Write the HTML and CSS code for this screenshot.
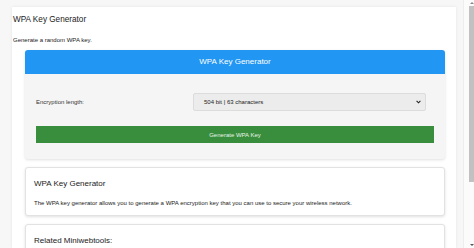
FILE: index.html
```html
<!DOCTYPE html>
<html lang="en">

<head>
    <meta charset="UTF-8">
    <meta name="viewport" content="width=device-width, initial-scale=1.0">
    <title>WPA Key Generator</title>
    <link rel="stylesheet" href="styles.css">
</head>

<body>
    <div class="page">
        <div class="intro">
            <h1>WPA Key Generator</h1>
            <p>Generate a random WPA key.</p>
        </div>

        <div class="tools">
            <div class="card tool-card">
                <div class="tool-header">WPA Key Generator</div>
                <div class="tool-body">
                    <div class="form-row">
                        <label for="key-length">Encryption length:</label>
                        <div class="select-box">
                            <span id="key-length">504 bit | 63 characters</span>
                            <svg class="chevron" width="5" height="4" viewBox="0 0 5 4">
                                <path d="M0.6 0.8 L2.5 2.8 L4.4 0.8" fill="none" stroke="#222" stroke-width="1.1"/>
                            </svg>
                        </div>
                    </div>
                    <button class="generate-button">Generate WPA Key</button>
                </div>
            </div>

            <div class="card info-card">
                <h2>WPA Key Generator</h2>
                <p>The WPA key generator allows you to generate a WPA encryption key that you can use to secure your wireless network.</p>
            </div>

            <div class="card info-card">
                <h2>Related Miniwebtools:</h2>
            </div>
        </div>
    </div>

    <div class="scrollbar">
        <span class="scroll-arrow up"></span>
        <div class="scroll-thumb"></div>
        <span class="scroll-arrow down"></span>
    </div>
</body>

</html>
```

FILE: styles.css
```css
* {
    margin: 0;
    padding: 0;
    box-sizing: border-box;
}

html,
body {
    height: 248px;
    overflow: hidden;
}

body {
    font-family: "Liberation Sans", Arial, sans-serif;
    color: #333;
    background-color: #f7f7f7;
    padding: 7px 0 0 12px;
}

.page {
    width: 444px;
    height: 241px;
    overflow: hidden;
    background-color: #fff;
    box-shadow: 0 0 3px rgba(0, 0, 0, 0.08);
}

.intro {
    padding: 8px 0 0 1px;
}

.intro h1 {
    font-size: 8.2px;
    font-weight: normal;
    line-height: 10px;
    color: #222;
}

.intro p {
    font-size: 6px;
    line-height: 8px;
    margin-top: 11px;
    color: #222;
}

.tools {
    display: flex;
    flex-direction: column;
    gap: 8px;
    padding: 6px 11px 4px 13px;
}

.card {
    border: 1px solid #e2e2e2;
    border-radius: 3px;
    box-shadow: 0 1px 3px rgba(0, 0, 0, 0.12);
    background-color: #fff;
}

.tool-card {
    background-color: #f5f5f5;
    border: none;
}

.tool-header {
    height: 24px;
    line-height: 24px;
    text-align: center;
    background-color: #2196f3;
    color: #fff;
    font-size: 8px;
    border-radius: 3px 3px 0 0;
}

.tool-body {
    padding: 19px 11px 16px;
}

.form-row {
    display: grid;
    grid-template-columns: 157px 233px;
    align-items: center;
}

.form-row label {
    font-size: 6px;
    color: #333;
}

.select-box {
    display: flex;
    align-items: center;
    justify-content: space-between;
    height: 18px;
    padding: 0 4px 0 10px;
    background-color: #ececec;
    border: 1px solid #dcdcdc;
    border-radius: 2px;
    font-size: 6px;
    color: #222;
}

.generate-button {
    display: block;
    width: 100%;
    height: 17px;
    margin-top: 15px;
    border: none;
    background-color: #388e3c;
    color: #e8f3e8;
    font-family: inherit;
    font-size: 6px;
}

.info-card {
    padding: 11px 8px 8px;
}

.info-card h2 {
    font-size: 8px;
    font-weight: normal;
    line-height: 10px;
    color: #222;
}

.info-card p {
    font-size: 6px;
    line-height: 8px;
    margin-top: 10px;
    color: #222;
}

.scrollbar {
    position: fixed;
    top: 0;
    right: 0;
    width: 11px;
    height: 248px;
    background-color: #fbfbfb;
    border-left: 1px solid #ededed;
}

.scroll-thumb {
    position: absolute;
    top: 6px;
    left: 5px;
    width: 5px;
    height: 176px;
    background-color: #c1c1c1;
}

.scroll-arrow {
    position: absolute;
    left: 6px;
    width: 0;
    height: 0;
    border-left: 2px solid transparent;
    border-right: 2px solid transparent;
}

.scroll-arrow.up {
    top: 2px;
    border-bottom: 2px solid #888;
}

.scroll-arrow.down {
    bottom: 2px;
    border-top: 2px solid #555;
}
```
